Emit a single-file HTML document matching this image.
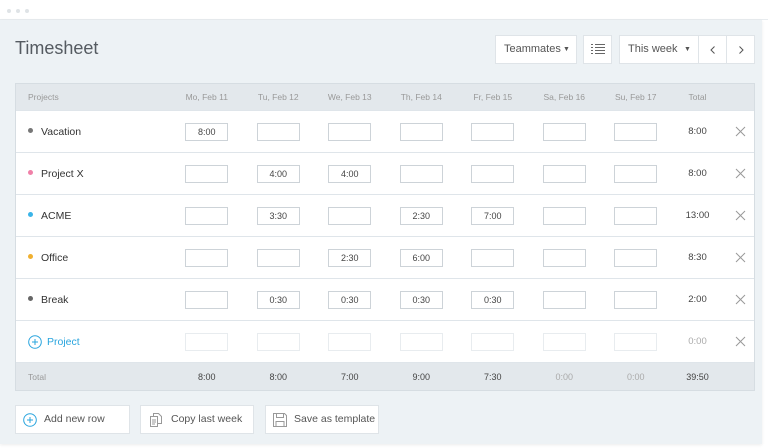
<!DOCTYPE html>
<html><head><style>
*{box-sizing:border-box;margin:0;padding:0}
body{width:768px;height:448px;background:#fff;font-family:"Liberation Sans",sans-serif;position:relative;overflow:hidden;white-space:nowrap}
.top{position:absolute;left:0;top:0;width:768px;height:20px;background:#fff;border-bottom:1px solid #e8ecef}
.top i{position:absolute;top:9px;width:4px;height:4px;border-radius:50%;background:#dfe3e6}
.main{position:absolute;left:0;top:20px;width:762px;height:424px;background:#edf2f5;box-shadow:0 1px 3px rgba(0,0,0,.08)}
h1{position:absolute;left:15px;top:38px;font-weight:normal;font-size:18px;color:#555b61}
.btn{position:absolute;top:35px;height:29px;background:#fff;border:1px solid #dfe4e8;font-size:11px;color:#555;line-height:27px}
.tbl{position:absolute;left:15px;top:83px;width:740px;border:1px solid #d6dde2;background:#fff}
.r{display:grid;grid-template-columns:155px repeat(7,71.5px) 52px 33px;height:42px;border-bottom:1px solid #dfe5ea;align-items:center;font-size:9.5px;color:#444}
.r>div{text-align:center}
.r>div:first-child{text-align:left;padding-left:12px;font-size:10.5px;color:#333}
.h{height:27px;background:#e3e8ec;color:#999!important;font-size:8.5px}
.h>div{color:#999}
.h>div:first-child{font-size:8.5px!important;color:#999!important}
.t{height:27px;background:#e3e8ec;border-bottom:none;font-size:9px}
.in{display:inline-block;width:43px;height:18px;border:1px solid #cdd3d8;line-height:16px;font-size:9px;vertical-align:middle}
.dot{display:inline-block;width:5px;height:5px;border-radius:50%;margin-right:8px;vertical-align:middle;position:relative;top:-1px}
.x svg{display:block;margin:0 auto}
.bb{position:absolute;top:405px;height:29px;background:#fff;border:1px solid #dfe4e8;font-size:10.5px;color:#555;line-height:27px}
</style></head><body>
<div class="top"><i style="left:7px"></i><i style="left:16px"></i><i style="left:25px"></i></div>
<div class="main"></div>
<h1>Timesheet</h1>
<div class="btn" style="left:495px;width:82px;padding-left:8px">Teammates<span style="position:absolute;left:67px;top:0;font-size:7px">▼</span></div>
<div class="btn" style="left:583px;width:29px"><svg width="27" height="27" viewBox="0 0 27 27"><g stroke="#666" stroke-width="1"><path d="M7 8.5h2M11 8.5h10M7 11.5h2M11 11.5h10M7 14.5h2M11 14.5h10M7 17.5h2M11 17.5h10"/></g></svg></div>
<div class="btn" style="left:619px;width:136px;padding-left:8px">This week<span style="position:absolute;left:64px;top:0;font-size:7px">▼</span>
<span style="position:absolute;left:78px;top:0;width:1px;height:27px;background:#dfe4e8"></span>
<svg style="position:absolute;left:88px;top:9px" width="10" height="10" viewBox="0 0 10 10"><path d="M6.5 1.5L3 5l3.5 3.5" fill="none" stroke="#555"/></svg>
<span style="position:absolute;left:106px;top:0;width:1px;height:27px;background:#dfe4e8"></span>
<svg style="position:absolute;left:116px;top:9px" width="10" height="10" viewBox="0 0 10 10"><path d="M3.5 1.5L7 5 3.5 8.5" fill="none" stroke="#555"/></svg></div>
<div class="tbl">
<div class="r h"><div>Projects</div><div>Mo, Feb 11</div><div>Tu, Feb 12</div><div>We, Feb 13</div><div>Th, Feb 14</div><div>Fr, Feb 15</div><div>Sa, Feb 16</div><div>Su, Feb 17</div><div>Total</div><div></div></div>
<div class="r"><div><span class="dot" style="background:#777"></span>Vacation</div><div><span class="in">8:00</span></div><div><span class="in"></span></div><div><span class="in"></span></div><div><span class="in"></span></div><div><span class="in"></span></div><div><span class="in"></span></div><div><span class="in"></span></div><div>8:00</div><div class="x"><svg width="11" height="11"><path d="M1 1l9 9M10 1l-9 9" stroke="#999"/></svg></div></div>
<div class="r"><div><span class="dot" style="background:#f080a8"></span>Project X</div><div><span class="in"></span></div><div><span class="in">4:00</span></div><div><span class="in">4:00</span></div><div><span class="in"></span></div><div><span class="in"></span></div><div><span class="in"></span></div><div><span class="in"></span></div><div>8:00</div><div class="x"><svg width="11" height="11"><path d="M1 1l9 9M10 1l-9 9" stroke="#999"/></svg></div></div>
<div class="r"><div><span class="dot" style="background:#3ab4e8"></span>ACME</div><div><span class="in"></span></div><div><span class="in">3:30</span></div><div><span class="in"></span></div><div><span class="in">2:30</span></div><div><span class="in">7:00</span></div><div><span class="in"></span></div><div><span class="in"></span></div><div>13:00</div><div class="x"><svg width="11" height="11"><path d="M1 1l9 9M10 1l-9 9" stroke="#999"/></svg></div></div>
<div class="r"><div><span class="dot" style="background:#f0b030"></span>Office</div><div><span class="in"></span></div><div><span class="in"></span></div><div><span class="in">2:30</span></div><div><span class="in">6:00</span></div><div><span class="in"></span></div><div><span class="in"></span></div><div><span class="in"></span></div><div>8:30</div><div class="x"><svg width="11" height="11"><path d="M1 1l9 9M10 1l-9 9" stroke="#999"/></svg></div></div>
<div class="r"><div><span class="dot" style="background:#666"></span>Break</div><div><span class="in"></span></div><div><span class="in">0:30</span></div><div><span class="in">0:30</span></div><div><span class="in">0:30</span></div><div><span class="in">0:30</span></div><div><span class="in"></span></div><div><span class="in"></span></div><div>2:00</div><div class="x"><svg width="11" height="11"><path d="M1 1l9 9M10 1l-9 9" stroke="#999"/></svg></div></div>
<div class="r"><div style="color:#2aa5de!important;padding-left:12px"><svg width="14" height="14" viewBox="0 0 14 14" style="vertical-align:middle;margin-right:5px"><circle cx="7" cy="7" r="6.3" fill="none" stroke="#2aa5de"/><path d="M7 4v6M4 7h6" stroke="#2aa5de"/></svg>Project</div><div><span class="in" style="border-color:#e8ecef"></span></div><div><span class="in" style="border-color:#e8ecef"></span></div><div><span class="in" style="border-color:#e8ecef"></span></div><div><span class="in" style="border-color:#e8ecef"></span></div><div><span class="in" style="border-color:#e8ecef"></span></div><div><span class="in" style="border-color:#e8ecef"></span></div><div><span class="in" style="border-color:#e8ecef"></span></div><div style="color:#aaa">0:00</div><div class="x"><svg width="11" height="11"><path d="M1 1l9 9M10 1l-9 9" stroke="#999"/></svg></div></div>
<div class="r t"><div style="color:#999!important;font-size:8.5px!important">Total</div><div>8:00</div><div>8:00</div><div>7:00</div><div>9:00</div><div>7:30</div><div style="color:#aaa">0:00</div><div style="color:#aaa">0:00</div><div>39:50</div><div></div></div>
</div>
<div class="bb" style="left:15px;width:115px;padding-left:28px"><svg width="14" height="14" viewBox="0 0 14 14" style="position:absolute;left:7px;top:7px"><circle cx="7" cy="7" r="6.3" fill="none" stroke="#2aa5de"/><path d="M7 4v6M4 7h6" stroke="#2aa5de"/></svg>Add new row</div>
<div class="bb" style="left:140px;width:114px;padding-left:30px"><svg width="16" height="16" viewBox="0 0 16 16" style="position:absolute;left:7px;top:6px"><path d="M2.5 4.5h7v10h-7z M5.5 4.5V1.5h5l3 3v7h-4" fill="none" stroke="#999"/><path d="M4 8h4M4 10h4M4 12h3" stroke="#999"/></svg>Copy last week</div>
<div class="bb" style="left:265px;width:114px;padding-left:28px"><svg width="16" height="16" viewBox="0 0 16 16" style="position:absolute;left:6px;top:6px"><path d="M1.5 1.5h11l2 2v11h-13z M4.5 1.5v4h7v-4 M4 14.5v-5h8v5" fill="none" stroke="#999"/></svg>Save as template</div>
</body></html>
